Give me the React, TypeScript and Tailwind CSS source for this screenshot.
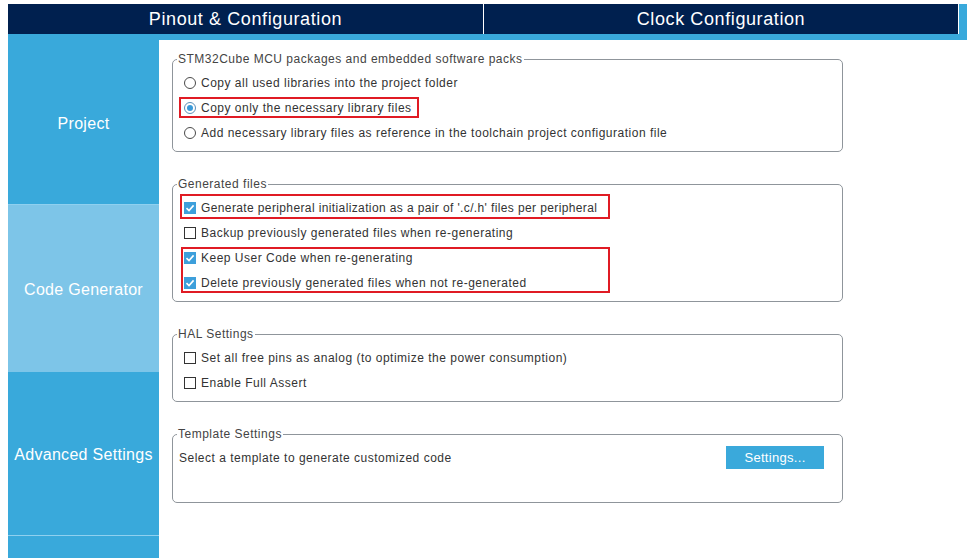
import React from 'react';

const font = "font-['Liberation_Sans',Arial,sans-serif]";

const Radio: React.FC<{ checked?: boolean }> = ({ checked }) =>
  checked ? (
    <span className="w-[12px] h-[12px] rounded-full border border-[#5c8fb8] bg-white flex items-center justify-center shrink-0">
      <span className="w-[6px] h-[6px] rounded-full bg-[#3a9ad9]" />
    </span>
  ) : (
    <span className="w-[12px] h-[12px] rounded-full border border-[#4a4a4a] bg-white shrink-0" />
  );

const Check: React.FC<{ checked?: boolean }> = ({ checked }) =>
  checked ? (
    <span className="w-[12px] h-[12px] bg-[#3d9fdb] flex items-center justify-center shrink-0">
      <svg width="10" height="10" viewBox="0 0 10 10" fill="none">
        <path d="M1.5 5.2 L4 7.6 L8.6 2.4" stroke="white" strokeWidth="1.6" />
      </svg>
    </span>
  ) : (
    <span className="w-[12px] h-[12px] border border-[#333] bg-white shrink-0" />
  );

const Row: React.FC<{ control: React.ReactNode; label: string; tight?: boolean }> = ({ control, label, tight }) => (
  <div className="h-[25px] flex items-center gap-[5px]">
    {control}
    <span className={`text-[12px] text-[#333] ${tight ? 'tracking-[0.38px]' : 'tracking-[0.5px]'}`}>{label}</span>
  </div>
);

const Group: React.FC<{ title: string; children: React.ReactNode; className?: string }> = ({
  title,
  children,
  className,
}) => (
  <fieldset className={`w-[671px] border border-[#8f959b] rounded-[5px] px-[11px] pb-[6px] ${className ?? ''}`}>
    <legend className="-ml-[7px] px-[1px] text-[12px] tracking-[0.5px] leading-[14px] text-[#444]">{title}</legend>
    <div className="pt-[4px]">{children}</div>
  </fieldset>
);

// red annotation frames drawn over the rows
const RedBox: React.FC<{ className: string }> = ({ className }) => (
  <span className={`absolute border-2 border-[#e01b24] pointer-events-none ${className}`} />
);

const SideItem: React.FC<{ label: string; active?: boolean; className: string }> = ({ label, active, className }) => (
  <div
    className={`flex items-center justify-center text-white text-[16px] tracking-[0.3px] ${
      active ? 'bg-[#7dc5e8]' : 'bg-[#39a9db]'
    } ${className}`}
  >
    {label}
  </div>
);

export default function App() {
  return (
    <div className={`w-[967px] h-[558px] bg-white pt-[4px] pl-[8px] overflow-hidden ${font}`}>
      <div className="flex h-[30px]">
        <div className="w-[475px] bg-[#00204f] text-white text-[18px] tracking-[0.6px] flex items-center justify-center">
          Pinout &amp; Configuration
        </div>
        <div className="w-px bg-white" />
        <div className="w-[474px] bg-[#00204f] text-white text-[18px] tracking-[0.6px] flex items-center justify-center">
          Clock Configuration
        </div>
        <div className="w-px bg-white" />
        <div className="flex-1 bg-[#39a9db]" />
      </div>
      <div className="h-[6px] bg-[#39a9db]" />

      <div className="flex h-[518px]">
        <div className="w-[151px] flex flex-col bg-[#39a9db]">
          <SideItem label="Project" className="h-[164px] pt-[3px]" />
          <SideItem label="Code Generator" active className="h-[168px] pt-[2px] border-t border-[#8fd0ef]" />
          <SideItem label="Advanced Settings" className="h-[163px] pt-[3px]" />
          <div className="flex-1 border-t border-[#8fd0ef]" />
        </div>

        <div className="pl-[13px] pt-[12px] flex flex-col gap-[25px]">
          <Group title="STM32Cube MCU packages and embedded software packs">
            <Row control={<Radio />} label="Copy all used libraries into the project folder" />
            <div className="relative">
              <RedBox className="-left-[5px] w-[240px] top-[2px] h-[21px]" />
              <Row control={<Radio checked />} label="Copy only the necessary library files" />
            </div>
            <Row
              control={<Radio />}
              label="Add necessary library files as reference in the toolchain project configuration file"
            />
          </Group>

          <Group title="Generated files">
            <div className="relative">
              <RedBox className="-left-[4px] w-[430px] -top-[1px] h-[25px]" />
              <Row
                control={<Check checked />}
                tight
                label="Generate peripheral initialization as a pair of '.c/.h' files per peripheral"
              />
            </div>
            <Row control={<Check />} label="Backup previously generated files when re-generating" />
            <div className="relative">
              <RedBox className="-left-[3px] w-[429px] top-[2px] h-[46px]" />
              <Row control={<Check checked />} label="Keep User Code when re-generating" />
              <Row control={<Check checked />} label="Delete previously generated files when not re-generated" />
            </div>
          </Group>

          <Group title="HAL Settings">
            <Row control={<Check />} label="Set all free pins as analog (to optimize the power consumption)" />
            <Row control={<Check />} label="Enable Full Assert" />
          </Group>

          <Group title="Template Settings" className="pb-[32px]">
            <div className="h-[25px] flex items-center justify-between -ml-[5px] pr-[7px]">
              <span className="text-[12px] tracking-[0.5px] text-[#333]">Select a template to generate customized code</span>
              <button className="w-[98px] h-[23px] bg-[#3aa9db] text-white text-[13px] tracking-[0.3px]">Settings...</button>
            </div>
          </Group>
        </div>
      </div>
    </div>
  );
}
